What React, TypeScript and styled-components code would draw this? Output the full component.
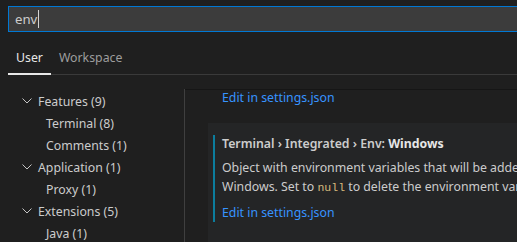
import React from 'react';
import styled, { createGlobalStyle } from 'styled-components';

const Global = createGlobalStyle`
  html, body {
    margin: 0;
    padding: 0;
    background: #1f1f1f;
    overflow: hidden;
  }
  body {
    font-family: "Noto Sans", "Open Sans", sans-serif;
    color: #cccccc;
  }
`;

const Page = styled.div`
  width: 517px;
  height: 242px;
  padding: 6px 0 0 8px;
  box-sizing: border-box;
  display: flex;
  flex-direction: column;
  overflow: hidden;
`;

const SearchBox = styled.div`
  height: 26px;
  box-sizing: border-box;
  border: 1px solid #0078d4;
  border-right: none;
  background: #3c3c3c;
  display: flex;
  align-items: center;
  padding-left: 6px;
  font-size: 13.2px;
  color: #cccccc;
`;

const Caret = styled.span`
  display: inline-block;
  width: 1px;
  height: 18px;
  background: #d4d4d4;
  margin-left: 1px;
`;

const TabBar = styled.div`
  height: 43px;
  box-sizing: border-box;
  display: flex;
  align-items: stretch;
  border-bottom: 1px solid #3a3a3a;
`;

const Tab = styled.div<{ $active?: boolean }>`
  padding: 0 8px;
  display: flex;
  align-items: center;
  padding-top: 10px;
  box-sizing: border-box;
  font-size: 12.3px;
  color: ${p => (p.$active ? '#e7e7e7' : '#9d9d9d')};
  border-bottom: 2px solid ${p => (p.$active ? '#e7e7e7' : 'transparent')};
  margin-bottom: -1px;
`;

const Body = styled.div`
  flex: 1;
  display: flex;
  min-height: 0;
`;

const Tree = styled.div`
  width: 176px;
  padding-top: 15px;
  flex-shrink: 0;
`;

const TreeRow = styled.div<{ $depth: number }>`
  height: 22px;
  display: flex;
  align-items: center;
  padding-left: ${p => (p.$depth === 0 ? 14 : 38)}px;
  font-size: 12.3px;
  color: #cccccc;
  white-space: nowrap;
`;

const Chevron = styled.svg`
  width: 10px;
  height: 6px;
  margin-right: 6px;
  flex-shrink: 0;
`;

const Pane = styled.div`
  flex: 1;
  margin-top: 14px;
  border-left: 1px solid #3f3f3f;
  box-shadow: inset 0 1px 0 #161616;
  padding-left: 23px;
  display: flex;
  flex-direction: column;
  overflow: hidden;
`;

const Item = styled.div<{ $focused?: boolean }>`
  background: ${p => (p.$focused ? '#242526' : 'transparent')};
  padding: ${p => (p.$focused ? '12px 0 20px 5px' : '0 0 0 5px')};
`;

const ItemInner = styled.div<{ $modified?: boolean }>`
  border-left: 2px solid ${p => (p.$modified ? '#0c7d9d' : 'transparent')};
  padding-left: 7px;
  white-space: nowrap;
  font-size: 12.3px;
`;

const Title = styled.div`
  line-height: 18px;
  font-weight: 600;
  color: #cccccc;
  b {
    font-weight: 700;
    color: #e7e7e7;
  }
`;

const Description = styled.div`
  margin-top: 5px;
  line-height: 19px;
  color: #cccccc;
  code {
    font-family: "Liberation Mono", monospace;
    font-size: 11.5px;
    color: #d7ba7d;
  }
`;

const EditLink = styled.div<{ $first?: boolean }>`
  margin-top: ${p => (p.$first ? 0 : 7)}px;
  line-height: 18px;
  color: #3794ff;
`;

const Gap = styled.div`
  height: 18px;
`;

const ChevronIcon = () => (
  <Chevron viewBox="0 0 10 6">
    <path d="M0.5 0.5 L5 5 L9.5 0.5" fill="none" stroke="#c5c5c5" strokeWidth="1" />
  </Chevron>
);

const tree = [
  { label: 'Features (9)', depth: 0 },
  { label: 'Terminal (8)', depth: 1 },
  { label: 'Comments (1)', depth: 1 },
  { label: 'Application (1)', depth: 0 },
  { label: 'Proxy (1)', depth: 1 },
  { label: 'Extensions (5)', depth: 0 },
  { label: 'Java (1)', depth: 1 },
];

export default function App() {
  return (
    <>
      <Global />
      <Page>
        <SearchBox>
          env<Caret />
        </SearchBox>
        <TabBar>
          <Tab $active>User</Tab>
          <Tab>Workspace</Tab>
        </TabBar>
        <Body>
          <Tree>
            {tree.map(t => (
              <TreeRow key={t.label} $depth={t.depth}>
                {t.depth === 0 && <ChevronIcon />}
                {t.label}
              </TreeRow>
            ))}
          </Tree>
          <Pane>
            <Item>
              <ItemInner>
                <EditLink $first>Edit in settings.json</EditLink>
              </ItemInner>
            </Item>
            <Gap />
            <Item $focused>
              <ItemInner $modified>
                <Title>
                  Terminal › Integrated › Env: <b>Windows</b>
                </Title>
                <Description>
                  Object with environment variables that will be added to the terminal process on
                  <br />
                  Windows. Set to <code>null</code> to delete the environment variable.
                </Description>
                <EditLink>Edit in settings.json</EditLink>
              </ItemInner>
            </Item>
          </Pane>
        </Body>
      </Page>
    </>
  );
}
